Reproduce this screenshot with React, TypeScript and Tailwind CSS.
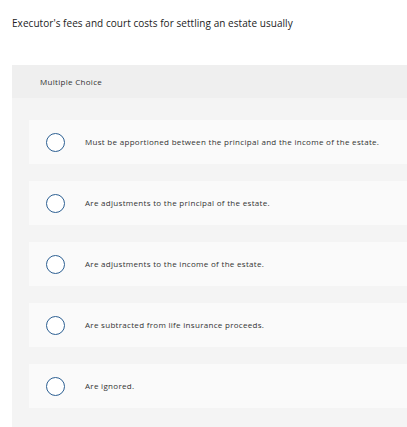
import React from "react";

const options = [
  "Must be apportioned between the principal and the income of the estate.",
  "Are adjustments to the principal of the estate.",
  "Are adjustments to the income of the estate.",
  "Are subtracted from life insurance proceeds.",
  "Are ignored.",
];

export default function App() {
  return (
    <div
      className="w-[407px] h-[427px] bg-white overflow-hidden text-[#333]"
      style={{ fontFamily: "'Open Sans', 'Noto Sans', sans-serif" }}
    >
      <div className="pl-[12px] pt-[16px] h-[65px]">
        <p className="text-[10px] leading-[14px] text-[#222] tracking-[0.05px]">
          Executor's fees and court costs for settling an estate usually
        </p>
      </div>
      <div className="ml-[12px] bg-[#f4f4f4] h-[362px]">
        <div className="h-[33px] bg-[#efefef] pl-[28px] flex items-center">
          <span className="text-[8px] text-[#333] tracking-[0.3px]">Multiple Choice</span>
        </div>
        <div className="pl-[17px] pt-[22px] flex flex-col gap-[17px]">
          {options.map((o) => (
            <div key={o} className="h-[44px] bg-[#fafafa] flex items-center">
              <div className="ml-[17px] w-[19px] h-[19px] rounded-full border-[1.5px] border-[#2c5f92] bg-white" />
              <span className="ml-[20px] text-[8px] text-[#333] tracking-[0.3px]">{o}</span>
            </div>
          ))}
        </div>
      </div>
    </div>
  );
}
